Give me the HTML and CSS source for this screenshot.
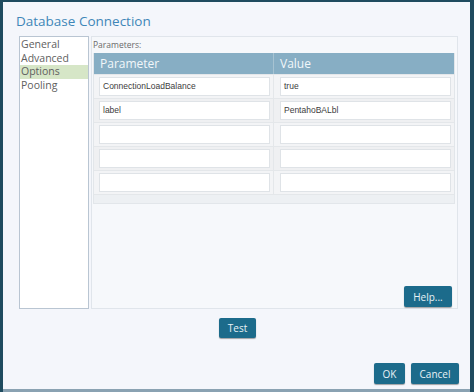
FILE: index.html
```html
<!DOCTYPE html>
<html>
<head>
<meta charset="utf-8">
<link rel="stylesheet" href="styles.css">
</head>
<body>
<div class="dialog">
  <div class="title">Database Connection</div>
  <div class="main">
    <div class="list">
      <div class="item">General</div>
      <div class="item">Advanced</div>
      <div class="item selected">Options</div>
      <div class="item">Pooling</div>
    </div>
    <div class="panel">
      <div class="plabel">Parameters:</div>
      <div class="table">
        <div class="thead">
          <div class="th c1">Parameter</div>
          <div class="th c2">Value</div>
        </div>
        <div class="row"><div class="cell c1"><div class="inp">ConnectionLoadBalance</div></div><div class="cell c2"><div class="inp">true</div></div></div>
        <div class="row"><div class="cell c1"><div class="inp">label</div></div><div class="cell c2"><div class="inp">PentahoBALbl</div></div></div>
        <div class="row"><div class="cell c1"><div class="inp"></div></div><div class="cell c2"><div class="inp"></div></div></div>
        <div class="row"><div class="cell c1"><div class="inp"></div></div><div class="cell c2"><div class="inp"></div></div></div>
        <div class="row"><div class="cell c1"><div class="inp"></div></div><div class="cell c2"><div class="inp"></div></div></div>
        <div class="tfoot"></div>
      </div>
      <div class="helprow"><button class="btn help">Help...</button></div>
    </div>
  </div>
  <div class="testrow"><button class="btn test">Test</button></div>
  <div class="actions"><button class="btn ok">OK</button><button class="btn cancel">Cancel</button></div>
</div>
</body>
</html>
```
FILE: styles.css
```css
html, body { margin: 0; padding: 0; }
body {
  background: #1f4b5f;
  width: 474px;
  height: 392px;
  overflow: hidden;
  font-family: "Open Sans", sans-serif;
}
.dialog {
  margin: 2px 4px 0 3px;
  height: 387px;
  background: #f4f6fb;
  border-bottom: 3px solid #8aa2b2;
  display: flex;
  flex-direction: column;
}
.title {
  padding: 10px 0 0 13px;
  height: 24px;
  box-sizing: border-box;
  font-size: 13.5px;
  color: #3f86b8;
  line-height: 18px;
}
.main {
  display: flex;
  margin: 10px 0 0 16px;
  gap: 2px;
}
.list {
  width: 68px;
  height: 270px;
  background: #fff;
  border: 1px solid #b9c5d2;
  padding-top: 1px;
}
.item {
  font-size: 10.5px;
  color: #606060;
  line-height: 13.5px;
  padding-left: 1px;
}
.item.selected { background: #d6e6c7; }
.panel {
  width: 365px;
  height: 271px;
  background: #f6f8fb;
  border: 1px solid #e0e5eb;
  display: flex;
  flex-direction: column;
}
.plabel {
  font-size: 8.5px;
  color: #6a6a6a;
  line-height: 12px;
  padding: 2px 0 0 1px;
  height: 16px;
  box-sizing: border-box;
}
.table {
  margin: 0 2px 0 1px;
  border-left: 1px solid #e2e6ea;
  border-right: 1px solid #e2e6ea;
}
.thead {
  display: flex;
  height: 21px;
  background: #87aec4;
  color: #f2f7fa;
  font-size: 12px;
  line-height: 21px;
}
.c1 { width: 180px; }
.c2 { flex: 1; }
.th { padding-left: 6px; box-sizing: border-box; }
.th.c1 { border-right: 1px solid #a7c3d2; }
.row {
  display: flex;
  height: 24px;
  background: #f3f4f6;
  border-top: 1px solid #e4e7ea;
  box-sizing: border-box;
}
.row:nth-of-type(odd) { background: #eff0f2; }
.cell { padding: 2px 3px 0 5px; box-sizing: border-box; }
.cell.c1 { border-right: 1px solid #e4e7ea; }
.cell.c2 { padding-left: 6px; }
.inp {
  height: 19px;
  background: #fff;
  border: 1px solid #dfe3e7;
  box-sizing: border-box;
  font-family: "Liberation Sans", Arial, sans-serif;
  font-size: 8.5px;
  color: #3c3c3c;
  line-height: 17px;
  padding-left: 3px;
}
.tfoot {
  height: 8px;
  background: #edf0f3;
  border-top: 1px solid #e4e7ea;
  border-bottom: 1px solid #e2e6ea;
}
.helprow {
  margin-top: auto;
  display: flex;
  justify-content: flex-end;
  padding: 0 5px 1px 0;
}
.btn {
  font-family: "Open Sans", sans-serif;
  background: #1c6b8b;
  color: #e8f2f6;
  border: none;
  border-radius: 2px;
  box-shadow: 0 1px 1px rgba(0,0,0,0.35);
  font-size: 10px;
  padding: 0;
  height: 21px;
}
.help { width: 48px; }
.testrow {
  display: flex;
  justify-content: center;
  margin-top: 9px;
  padding-left: 2px;
}
.test { width: 37px; height: 20px; }
.actions {
  margin-top: auto;
  display: flex;
  justify-content: flex-end;
  gap: 6px;
  padding: 0 11px 5px 0;
}
.ok { width: 31px; }
.cancel { width: 48px; }
```
